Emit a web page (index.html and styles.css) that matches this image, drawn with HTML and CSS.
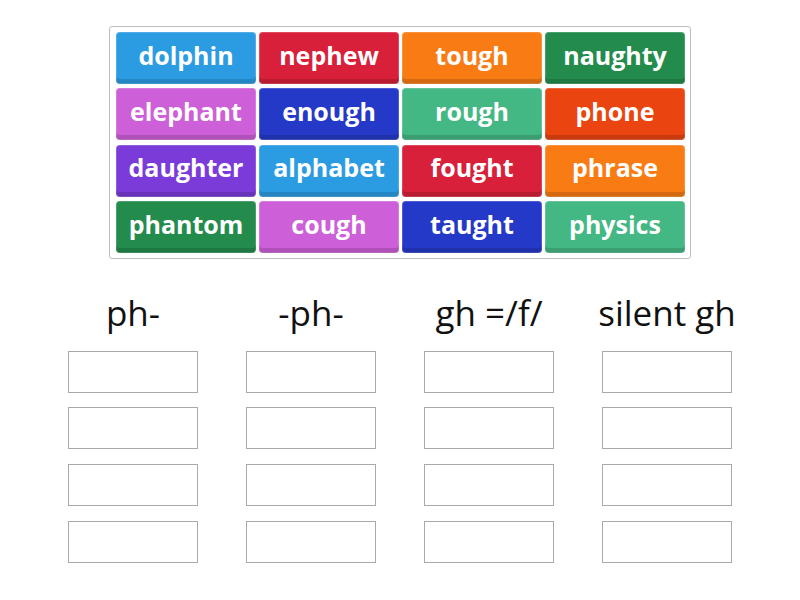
FILE: index.html
```html
<!DOCTYPE html>
<html lang="en">
<head>
    <meta charset="UTF-8">
    <title>Group sort</title>
    <link rel="stylesheet" href="styles.css">
</head>
<body>
    <div class="page">
        <div class="tray">
            <div class="tile blue">dolphin</div>
            <div class="tile red">nephew</div>
            <div class="tile orange">tough</div>
            <div class="tile green">naughty</div>
            <div class="tile pink">elephant</div>
            <div class="tile navy">enough</div>
            <div class="tile mint">rough</div>
            <div class="tile flame">phone</div>
            <div class="tile purple">daughter</div>
            <div class="tile blue">alphabet</div>
            <div class="tile red">fought</div>
            <div class="tile orange">phrase</div>
            <div class="tile green">phantom</div>
            <div class="tile pink">cough</div>
            <div class="tile navy">taught</div>
            <div class="tile mint">physics</div>
        </div>

        <div class="groups">
            <div class="group">
                <h2>ph-</h2>
                <div class="slot"></div>
                <div class="slot"></div>
                <div class="slot"></div>
                <div class="slot"></div>
            </div>
            <div class="group">
                <h2>-ph-</h2>
                <div class="slot"></div>
                <div class="slot"></div>
                <div class="slot"></div>
                <div class="slot"></div>
            </div>
            <div class="group">
                <h2>gh =/f/</h2>
                <div class="slot"></div>
                <div class="slot"></div>
                <div class="slot"></div>
                <div class="slot"></div>
            </div>
            <div class="group">
                <h2>silent gh</h2>
                <div class="slot"></div>
                <div class="slot"></div>
                <div class="slot"></div>
                <div class="slot"></div>
            </div>
        </div>
    </div>
</body>
</html>
```

FILE: styles.css
```css
body {
    margin: 0;
    padding: 0;
    font-family: "Open Sans", Arial, sans-serif;
    background-color: #fff;
    color: #111;
}
.page {
    display: flex;
    flex-direction: column;
    align-items: center;
    padding-top: 26px;
}
.tray {
    display: grid;
    grid-template-columns: repeat(4, 140px);
    grid-auto-rows: 52px;
    column-gap: 3px;
    row-gap: 4.4px;
    padding: 5px 5px 5px 6px;
    border: 1px solid #bdbdbd;
    border-radius: 3px;
}
.tile {
    display: flex;
    align-items: center;
    justify-content: center;
    padding-bottom: 7px;
    box-sizing: border-box;
    border-radius: 4px;
    color: #fff;
    font-weight: bold;
    font-size: 25px;
    box-shadow: inset 0 -5px 0 rgba(0, 0, 0, 0.14),
                inset 0 0 0 1px rgba(255, 255, 255, 0.18);
}
.blue { background-color: #2b9ce2; }
.red { background-color: #d8203a; }
.orange { background-color: #f97b14; }
.green { background-color: #238c4d; }
.pink { background-color: #cd5fd8; }
.navy { background-color: #2539c8; }
.mint { background-color: #44b884; }
.flame { background-color: #ea4511; }
.purple { background-color: #7b3bd9; }

.groups {
    display: grid;
    grid-template-columns: repeat(4, 130px);
    column-gap: 48px;
    margin-top: 32px;
}
.group {
    display: flex;
    flex-direction: column;
    gap: 14.6px;
}
.group h2 {
    margin: 0 -20px 1px -20px;
    font-weight: normal;
    font-size: 35px;
    line-height: 44px;
    text-align: center;
    white-space: nowrap;
}
.slot {
    height: 42px;
    box-sizing: border-box;
    border: 1px solid #a9a9a9;
}
```
